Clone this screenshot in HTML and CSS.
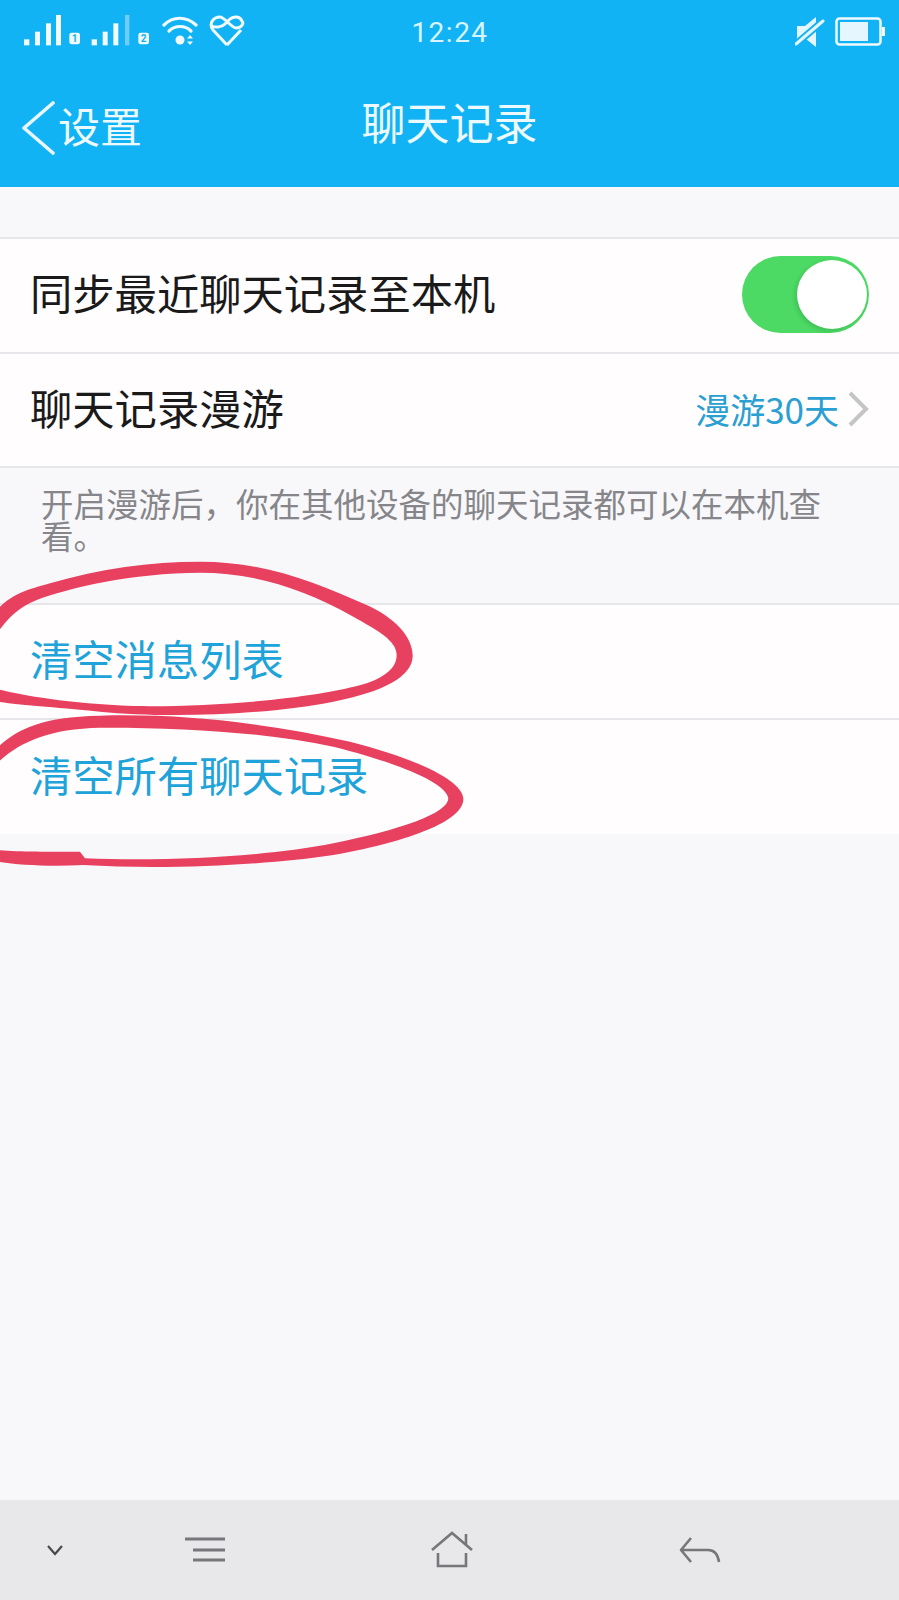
FILE: index.html
```html
<!DOCTYPE html>
<html lang="zh-CN">
<head>
<meta charset="utf-8">
<title>聊天记录</title>
<link rel="stylesheet" href="styles.css">
</head>
<body>
<div class="page">
  <header class="header">
    <div class="status">
      <div class="status-left">
        <svg class="sig" width="136" height="36" viewBox="66 36 408 108">
          <g fill="#f0faff">
            <rect x="72" y="118" width="16" height="18"/><rect x="105" y="95" width="15" height="41"/><rect x="138" y="70" width="15" height="66"/><rect x="168" y="45" width="15" height="91"/>
            <rect x="275" y="118" width="16" height="18"/><rect x="308" y="95" width="15" height="41"/><rect x="340" y="70" width="15" height="66"/>
            <rect x="375" y="45" width="13" height="91" fill="#6fcdf7"/>
            <rect x="208" y="98" width="32" height="35" rx="7"/><rect x="415" y="98" width="32" height="35" rx="7"/>
          </g>
          <text x="224" y="127" class="simno">1</text>
          <text x="431" y="127" class="simno">2</text>
        </svg>
        <svg class="wifi" width="36" height="32" viewBox="0 0 36 32">
          <g fill="none" stroke="#f0faff" stroke-width="3.2" stroke-linecap="round">
            <path d="M2 9C11 0 24 0 34 9"/><path d="M7 15C13 9 23 9 29 15"/>
          </g>
          <circle cx="18" cy="24" r="4.5" fill="#f0faff"/>
          <path d="M28 19l3 3.500h-6zM28 29l3-3.500h-6z" fill="#f0faff"/>
        </svg>
        <svg class="heart" width="36" height="33" viewBox="0 0 36 33">
          <g fill="none" stroke="#f0faff" stroke-width="3" stroke-linejoin="round">
            <path d="M18 30L4 15C-1 8 5 2 11 2C15 2 23 13 27 13C33 13 35 8 33 6C31 1 25 1 21 4L16 9C13 12 7 13 3 11"/>
            <path d="M18 30L32 15"/>
          </g>
        </svg>
      </div>
      <div class="clock">12:24</div>
      <div class="status-right">
        <svg width="30" height="32" viewBox="0 0 30 32">
          <path d="M2 10H10L21 1V31L11 23H2Z" fill="#e6f6fe"/>
          <path d="M1 28L28 5" stroke="#12b3f5" stroke-width="7"/>
          <path d="M1 28L28 5" stroke="#e6f6fe" stroke-width="3" stroke-linecap="round"/>
        </svg>
        <svg width="50" height="30" viewBox="0 0 50 30">
          <rect x="1.500" y="1.500" width="44" height="26" rx="3" fill="none" stroke="#f0faff" stroke-width="2.500"/>
          <rect x="5" y="5" width="28" height="19" fill="#e6f6fe"/>
          <rect x="47" y="10" width="3" height="9" fill="#f0faff"/>
        </svg>
      </div>
    </div>
    <nav class="nav">
      <div class="back">
        <svg class="back-icon" width="36" height="56" viewBox="0 0 36 56">
          <path d="M32 2L3 27L32 52" fill="none" stroke="#e8f7ff" stroke-width="3.600" stroke-linecap="round" stroke-linejoin="round"/>
        </svg>
        <span>设置</span>
      </div>
      <h1 class="title">聊天记录</h1>
    </nav>
  </header>

  <main class="main">
    <section class="group group-first">
      <div class="row">
        <span class="label">同步最近聊天记录至本机</span>
        <div class="toggle"><span class="knob"></span></div>
      </div>
      <div class="row row-last">
        <span class="label">聊天记录漫游</span>
        <div class="value">
          <span>漫游30天</span>
          <svg width="22" height="38" viewBox="0 0 22 38">
            <path d="M3 3L19 19L3 35" fill="none" stroke="#c5c5c8" stroke-width="4"/>
          </svg>
        </div>
      </div>
    </section>
    <p class="note">开启漫游后，你在其他设备的聊天记录都可以在本机查看。</p>
    <section class="group group-action">
      <div class="row"><span class="label action">清空消息列表</span></div>
      <div class="row row-end"><span class="label action">清空所有聊天记录</span></div>
    </section>
  </main>

  <footer class="softkeys">
    <svg width="20" height="12" viewBox="0 0 20 12">
      <path d="M3 2L10 10L17 2" fill="none" stroke="#4a4a4e" stroke-width="2.200"/>
    </svg>
    <svg width="44" height="28" viewBox="0 0 44 28">
      <path d="M2 3H42M10 14H42M10 24H42" fill="none" stroke="#77767a" stroke-width="3"/>
    </svg>
    <svg width="44" height="38" viewBox="0 0 44 38">
      <path d="M2 19L22 2L42 19M36 3V14M8 22V35H36V22" fill="none" stroke="#77767a" stroke-width="2.600"/>
    </svg>
    <svg width="44" height="28" viewBox="0 0 44 28">
      <path d="M13 2L3 14L13 26M3 14H30C37 14 40 19 41 26" fill="none" stroke="#77767a" stroke-width="2.600" stroke-linejoin="round"/>
    </svg>
  </footer>

  <svg class="scribble" width="480" height="330" viewBox="0 0 1440 990">
    <path fill="#e8405f" d="M-5 175C40 130 80 120 150 100C300 55 450 35 600 35C800 35 950 100 1100 165C1180 200 1240 260 1238 320C1235 380 1150 425 1000 455C800 495 500 505 300 485C150 470 60 465 -5 455L-5 418C60 435 200 460 400 468C650 472 950 445 1100 400C1170 375 1190 345 1190 315C1190 270 1130 240 1060 200C900 110 750 68 600 68C400 68 200 115 110 150C50 175 20 210 -5 245Z"/>
    <path fill="#e8405f" d="M-5 590C50 540 120 500 300 497C550 490 800 520 1050 575C1230 620 1395 690 1390 750C1385 820 1200 880 1000 915C800 945 500 960 250 945C150 950 50 945 -5 935L-5 900C50 905 150 905 240 905L255 925C500 935 800 920 1000 880C1200 840 1345 790 1345 745C1340 700 1200 640 1000 590C800 548 550 532 300 533C150 536 60 575 -5 636Z"/>
  </svg>
</div>
</body>
</html>
```

FILE: styles.css
```css
* { box-sizing: border-box; }

html, body { margin: 0; padding: 0; }

body {
  font-family: "Noto Sans CJK SC", "Noto Sans", sans-serif;
  background: #f8f8fb;
}

.page {
  position: relative;
  width: 899px;
  height: 1600px;
  display: flex;
  flex-direction: column;
  overflow: hidden;
}

.header {
  height: 187px;
  background: #12b3f5;
  color: #ecf9ff;
}

.status {
  height: 64px;
  display: grid;
  grid-template-columns: 1fr auto 1fr;
  align-items: center;
  padding: 0 14px 4px 22px;
}

.status-left {
  display: flex;
  align-items: center;
  gap: 4px;
}

.wifi { margin-top: 3px; }

.heart {
  margin-top: 3px;
  margin-left: 7px;
}

.simno {
  font-family: "Roboto", sans-serif;
  font-size: 30px;
  font-weight: 700;
  fill: #12b3f5;
  text-anchor: middle;
}

.clock {
  margin-top: 4px;
  margin-right: 7px;
  font-family: "Roboto", sans-serif;
  font-size: 28px;
  letter-spacing: 1.500px;
  color: #d9f3ff;
}

.status-right {
  display: flex;
  align-items: center;
  justify-content: flex-end;
  gap: 10px;
  margin-top: 3px;
}

.nav {
  position: relative;
  height: 123px;
  display: flex;
  align-items: center;
  justify-content: center;
}

.back {
  position: absolute;
  left: 21px;
  top: 28px;
  display: flex;
  align-items: center;
  gap: 1px;
  font-size: 42px;
  line-height: 56px;
}

.back-icon { margin-top: 9px; }

.title {
  margin: 0 0 10px;
  font-size: 44px;
  font-weight: 400;
  line-height: 56px;
}

.main { flex: 1; }

.group {
  background: #fffdfe;
  border-top: 2px solid #e6e6ea;
}

.group-first { margin-top: 50px; }

.row {
  height: 114.500px;
  padding: 0 30px 0 30px;
  display: flex;
  align-items: center;
  justify-content: space-between;
  border-bottom: 2px solid #e6e6ea;
}

.row-end {
  border-bottom: 0;
}

.label {
  margin-bottom: 6px;
  font-size: 42.300px;
  line-height: 56px;
  color: #1a1a1a;
}

.label.action { color: #20a3d8; }

.toggle {
  width: 127px;
  height: 77px;
  margin-bottom: 2px;
  padding: 4px 2px;
  display: flex;
  justify-content: flex-end;
  border-radius: 39px;
  background: #4cd964;
}

.knob {
  width: 70px;
  height: 69px;
  border-radius: 50%;
  background: #fff;
  box-shadow: -2px 2px 4px rgba(0, 60, 20, 0.16);
}

.value {
  display: flex;
  align-items: center;
  gap: 8px;
  margin-bottom: 2px;
  font-size: 35px;
  color: #2a9fd2;
}

.note {
  margin: 0;
  height: 135px;
  padding: 19px 30px 0 41px;
  font-size: 32.500px;
  line-height: 32px;
  color: #86868a;
}

.softkeys {
  height: 100px;
  background: #e8e7ea;
  display: grid;
  grid-template-columns: 110px 190px 304px 192px;
  justify-items: center;
  align-items: center;
}

.scribble {
  position: absolute;
  left: 0;
  top: 550px;
}
```
